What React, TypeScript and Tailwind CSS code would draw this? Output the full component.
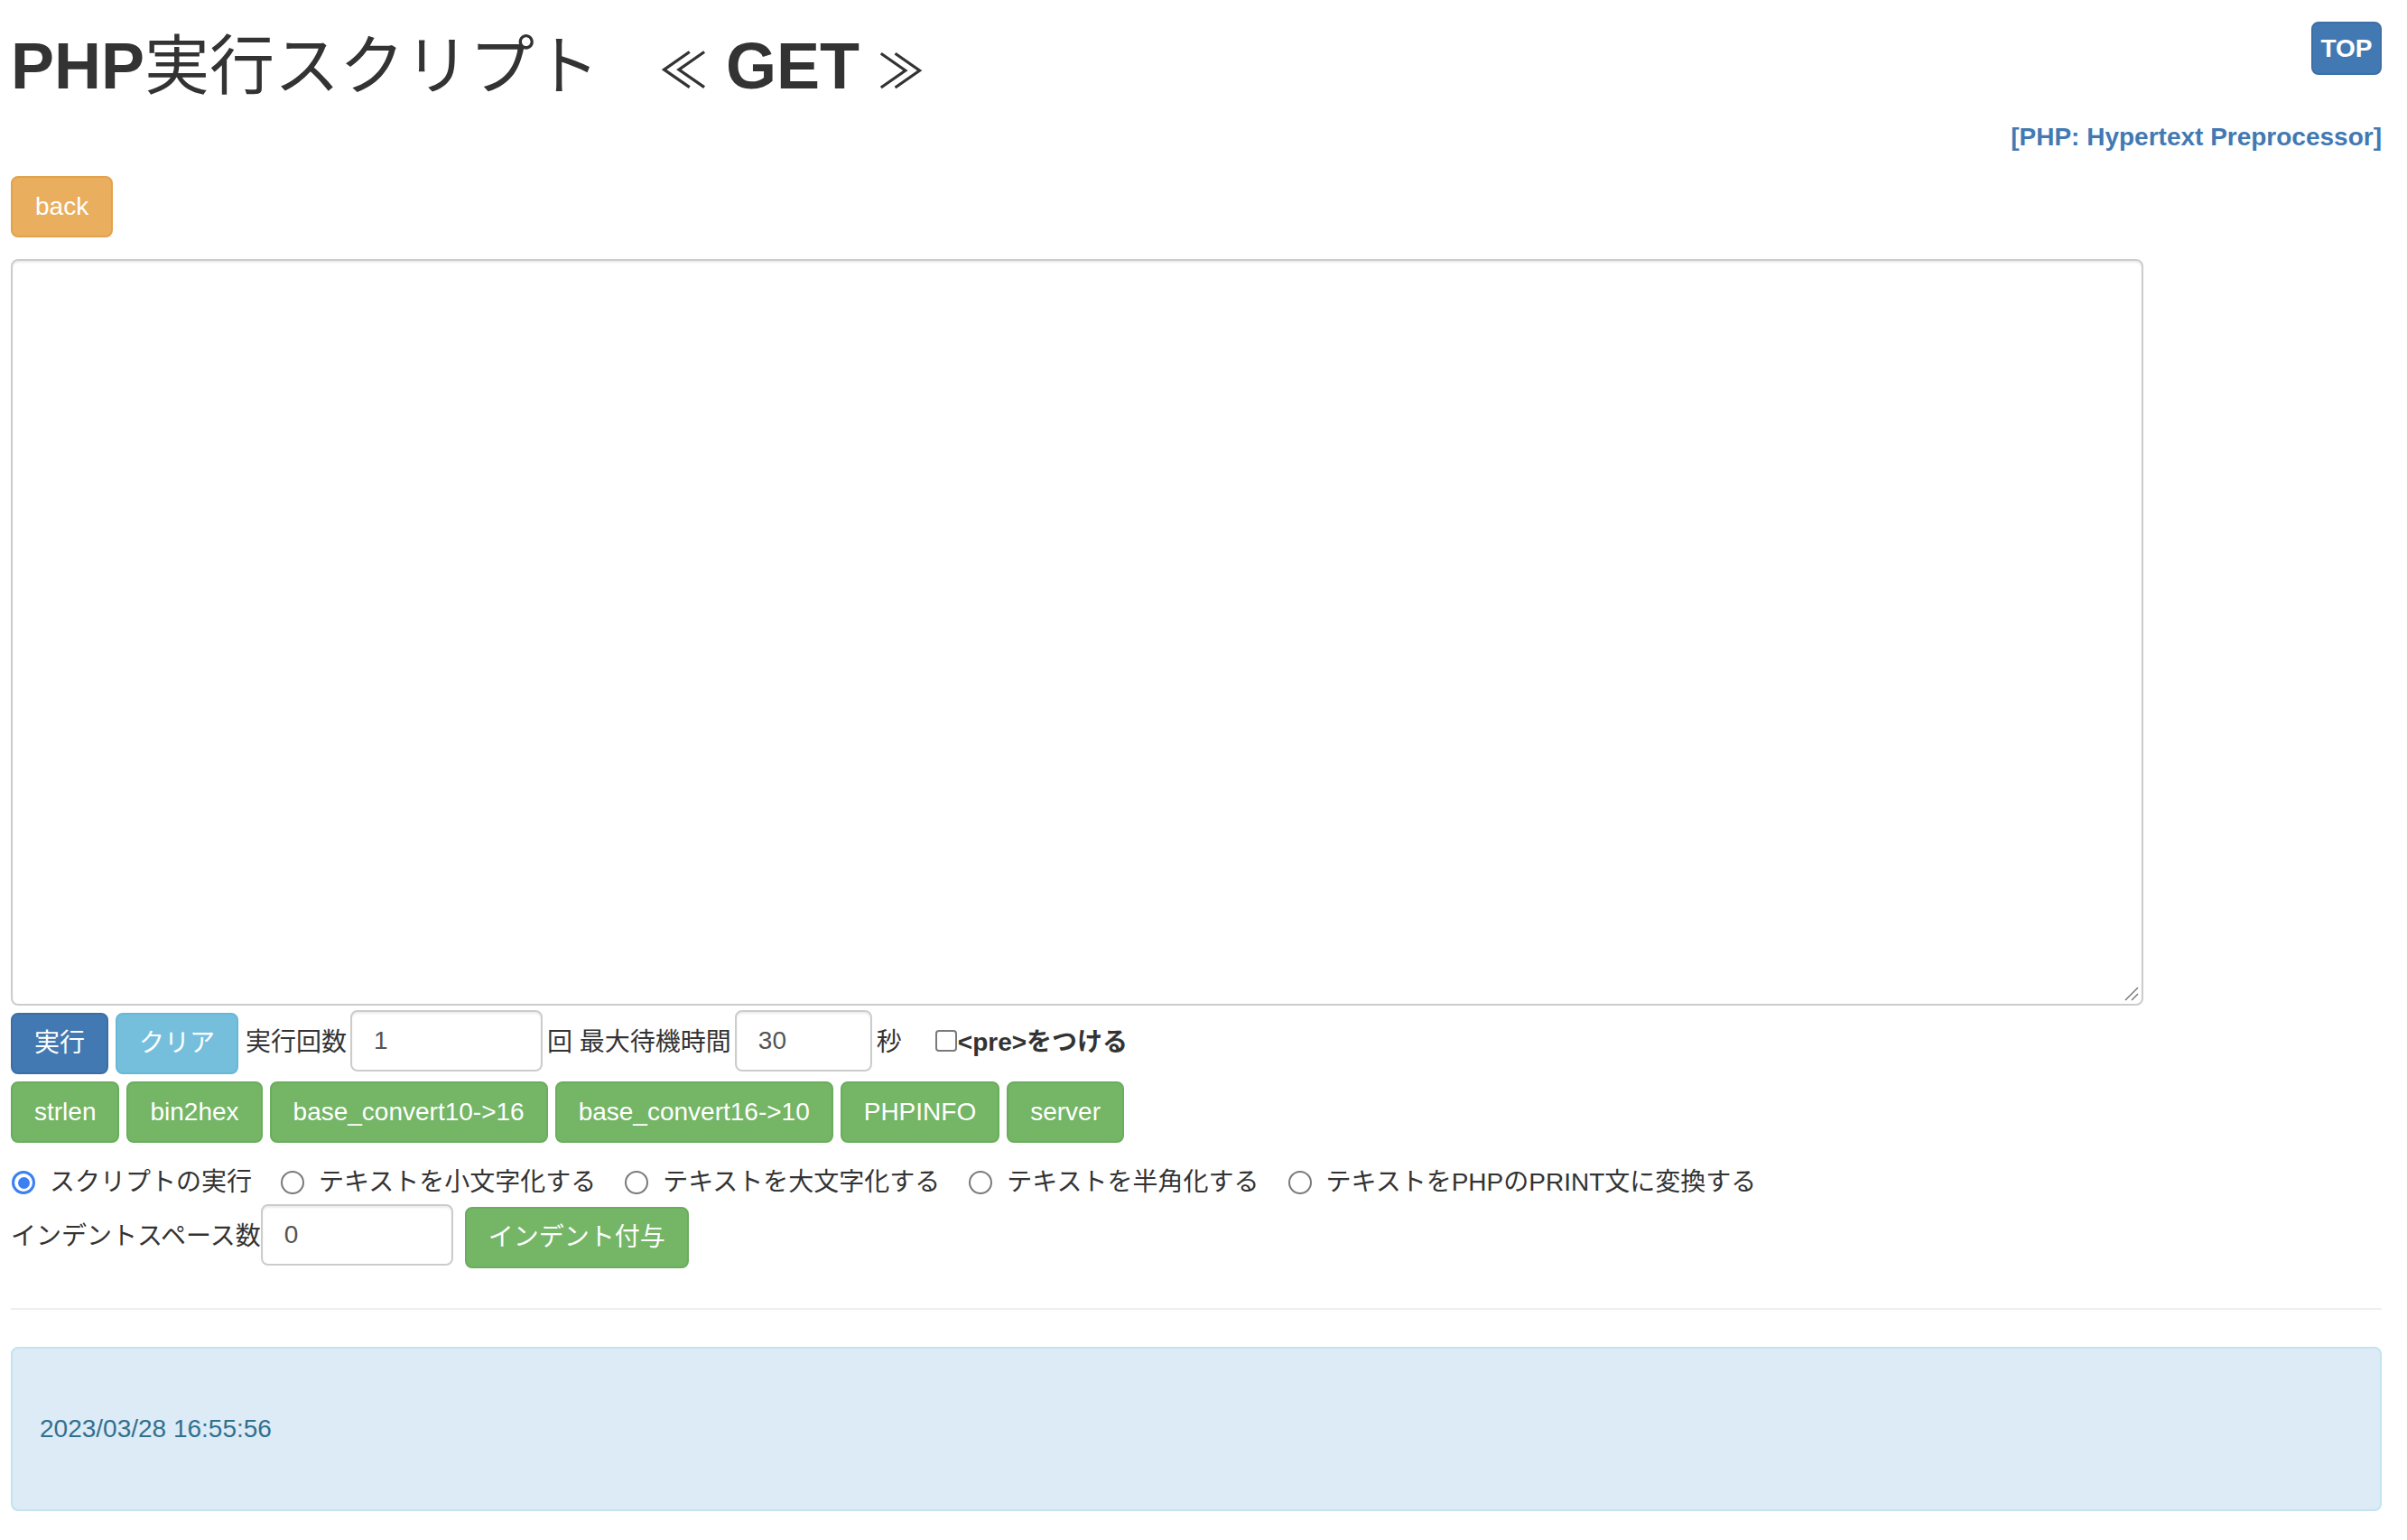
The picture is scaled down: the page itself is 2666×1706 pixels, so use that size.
import React from "react";

function Radio({ checked, label, first }: { checked?: boolean; label: string; first?: boolean }) {
  return (
    <div className={first ? "flex items-center ml-[1px]" : "flex items-center ml-[32px]"}>
      {checked ? (
        <span className="w-[26px] h-[26px] rounded-full border-[3px] border-[#3b80f3] bg-white flex items-center justify-center">
          <span className="w-[13px] h-[13px] rounded-full bg-[#3b80f3]" />
        </span>
      ) : (
        <span className="w-[26px] h-[26px] rounded-full border-2 border-[#7a7a7a] bg-white" />
      )}
      <span className="ml-[16px] text-[28px] leading-[40px] whitespace-nowrap">{label}</span>
    </div>
  );
}

function GreenBtn({ children }: { children: React.ReactNode }) {
  return (
    <button className="h-[68px] px-[24px] rounded-[8px] border-2 border-[#6aad5c] bg-[#74b566] text-white text-[28px] leading-[40px] whitespace-nowrap">
      {children}
    </button>
  );
}

export default function App() {
  return (
    <div className="min-h-screen bg-white pl-[12px] pr-[28px] text-[#333] font-['Liberation_Sans','Noto_Sans_CJK_JP',sans-serif]">
      <div className="flex justify-between items-start">
        <h1 className="mt-[33px] text-[72px] leading-[80px] font-normal whitespace-nowrap">
          <span className="font-bold">PHP</span>実行スクリプト<span className="inline-block w-[66px]" />
          <span className="text-[54px]">≪</span> <span className="font-bold">GET</span> <span className="text-[52px]">≫</span>
        </h1>
        <div className="flex flex-col items-end pt-[24px]">
          <button className="h-[59px] w-[78px] rounded-[8px] bg-[#4379b2] border-2 border-[#3d6fa5] text-white text-[28px] font-bold leading-none flex items-center justify-center">
            TOP
          </button>
          <a className="mt-[49px] text-[28px] leading-[40px] font-bold text-[#4279b3] whitespace-nowrap">
            [PHP: Hypertext Preprocessor]
          </a>
        </div>
      </div>

      <button className="mt-[23px] h-[68px] px-[25px] rounded-[8px] border-2 border-[#e3a24c] bg-[#e9ae5e] text-white text-[28px] leading-[40px]">
        back
      </button>

      <div className="relative mt-[24px] w-[2362px] h-[827px]">
        <textarea className="block w-full h-full resize-none rounded-[8px] border-2 border-[#ccc] bg-white shadow-[inset_0_2px_2px_rgba(0,0,0,0.075)] outline-none p-[12px] text-[28px]" />
        <svg className="absolute right-[4px] bottom-[4px]" width="18" height="18" viewBox="0 0 18 18">
          <line x1="2" y1="16" x2="16" y2="2" stroke="#777" strokeWidth="1.5" />
          <line x1="9" y1="16" x2="16" y2="9" stroke="#777" strokeWidth="1.5" />
        </svg>
      </div>

      <div className="mt-[5px] flex items-start h-[71px] text-[28px] leading-[40px] whitespace-nowrap">
        <button className="mt-[3px] h-[68px] px-[24px] rounded-[8px] border-2 border-[#3b6ea5] bg-[#4379b2] text-white">
          実行
        </button>
        <button className="mt-[3px] ml-[8px] h-[68px] px-[24px] rounded-[8px] border-2 border-[#66b8d7] bg-[#75bfdc] text-white">
          クリア
        </button>
        <span className="ml-[8px] self-center">実行回数</span>
        <input
          defaultValue="1"
          className="ml-[4px] w-[213px] h-[68px] px-[24px] rounded-[8px] border-2 border-[#ccc] bg-white shadow-[inset_0_2px_2px_rgba(0,0,0,0.075)] outline-none text-[28px] text-[#555]"
        />
        <span className="ml-[5px] self-center">回 最大待機時間</span>
        <input
          defaultValue="30"
          className="ml-[4px] w-[152px] h-[68px] px-[24px] rounded-[8px] border-2 border-[#ccc] bg-white shadow-[inset_0_2px_2px_rgba(0,0,0,0.075)] outline-none text-[28px] text-[#555]"
        />
        <span className="ml-[5px] self-center">秒</span>
        <span className="ml-[37px] mb-[4px] self-center w-[24px] h-[24px] rounded-[4px] border-2 border-[#7a7a7a] bg-white" />
        <span className="ml-[1px] self-center font-bold">&lt;pre&gt;をつける</span>
      </div>

      <div className="mt-[8px] flex gap-[8px]">
        <GreenBtn>strlen</GreenBtn>
        <GreenBtn>bin2hex</GreenBtn>
        <GreenBtn>base_convert10-&gt;16</GreenBtn>
        <GreenBtn>base_convert16-&gt;10</GreenBtn>
        <GreenBtn>PHPINFO</GreenBtn>
        <GreenBtn>server</GreenBtn>
      </div>

      <div className="mt-[24px] flex items-center h-[40px]">
        <Radio first checked label="スクリプトの実行" />
        <Radio label="テキストを小文字化する" />
        <Radio label="テキストを大文字化する" />
        <Radio label="テキストを半角化する" />
        <Radio label="テキストをPHPのPRINT文に変換する" />
      </div>

      <div className="mt-[4px] flex items-start h-[71px] text-[28px] leading-[40px] whitespace-nowrap">
        <span className="self-center">インデントスペース数</span>
        <input
          defaultValue="0"
          className="w-[213px] h-[68px] px-[24px] rounded-[8px] border-2 border-[#ccc] bg-white shadow-[inset_0_2px_2px_rgba(0,0,0,0.075)] outline-none text-[28px] text-[#555]"
        />
        <button className="mt-[3px] ml-[13px] h-[68px] px-[24px] rounded-[8px] border-2 border-[#6aad5c] bg-[#74b566] text-white">
          インデント付与
        </button>
      </div>

      <div className="mt-[44px] h-[2px] bg-[#eee]" />

      <div className="mt-[41px] h-[182px] rounded-[8px] border-2 border-[#c4e3ef] bg-[#dcebf6] px-[30px] flex items-center text-[#31708f] text-[28px]">
        2023/03/28 16:55:56
      </div>
    </div>
  );
}
